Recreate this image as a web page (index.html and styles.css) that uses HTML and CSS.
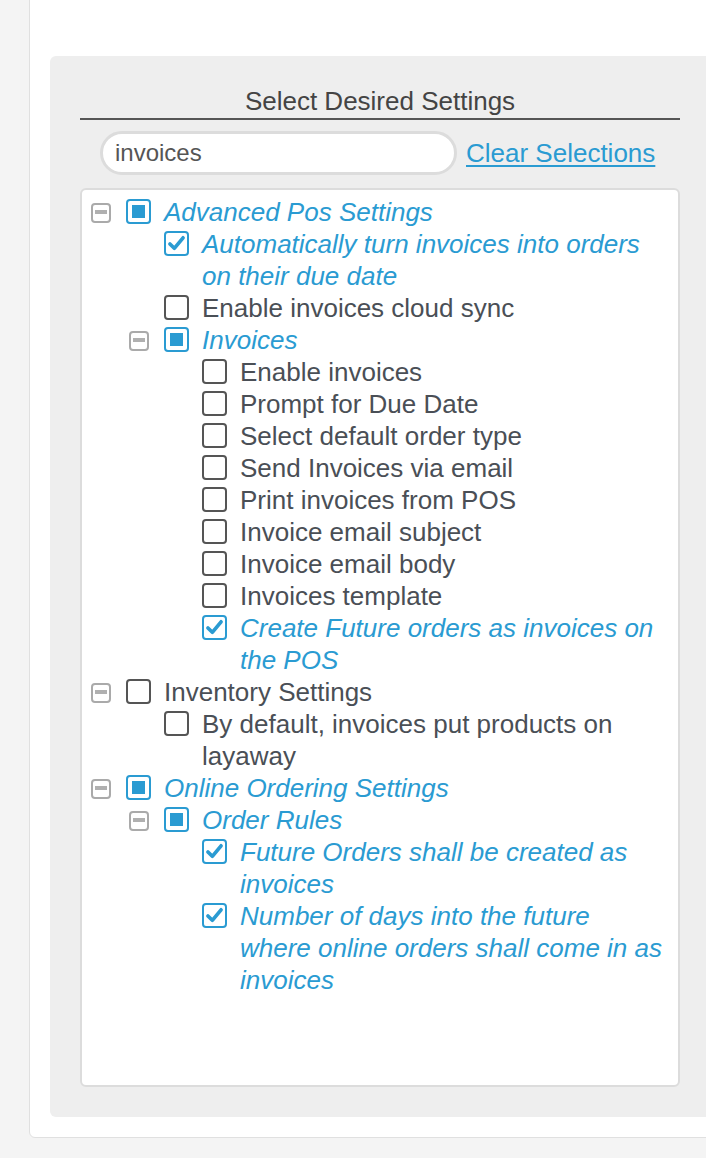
FILE: index.html
```html
<!DOCTYPE html>
<html>
<head>
<meta charset="utf-8">
<link rel="stylesheet" href="styles.css">
</head>
<body>
<div class="card">
  <div class="panel">
    <div class="inner">
      <h2 class="title">Select Desired Settings</h2>
      <div class="search-row">
        <div class="search"><span>invoices</span></div>
        <a class="clear" href="#">Clear Selections</a>
      </div>
      <div class="tree">
        <div class="row l0"><span class="tog"></span><span class="cb ind"></span><span class="lbl sel">Advanced Pos Settings</span></div>
        <div class="row l1"><span class="slot"></span><span class="cb chk"><svg viewBox="0 0 24 24"><path d="M4.5 12.5l5 5L19.5 5.5"/></svg></span><span class="lbl sel">Automatically turn invoices into orders on their due date</span></div>
        <div class="row l1"><span class="slot"></span><span class="cb"></span><span class="lbl">Enable invoices cloud sync</span></div>
        <div class="row l1"><span class="tog"></span><span class="cb ind"></span><span class="lbl sel">Invoices</span></div>
        <div class="row l2"><span class="slot"></span><span class="cb"></span><span class="lbl">Enable invoices</span></div>
        <div class="row l2"><span class="slot"></span><span class="cb"></span><span class="lbl">Prompt for Due Date</span></div>
        <div class="row l2"><span class="slot"></span><span class="cb"></span><span class="lbl">Select default order type</span></div>
        <div class="row l2"><span class="slot"></span><span class="cb"></span><span class="lbl">Send Invoices via email</span></div>
        <div class="row l2"><span class="slot"></span><span class="cb"></span><span class="lbl">Print invoices from POS</span></div>
        <div class="row l2"><span class="slot"></span><span class="cb"></span><span class="lbl">Invoice email subject</span></div>
        <div class="row l2"><span class="slot"></span><span class="cb"></span><span class="lbl">Invoice email body</span></div>
        <div class="row l2"><span class="slot"></span><span class="cb"></span><span class="lbl">Invoices template</span></div>
        <div class="row l2"><span class="slot"></span><span class="cb chk"><svg viewBox="0 0 24 24"><path d="M4.5 12.5l5 5L19.5 5.5"/></svg></span><span class="lbl sel">Create Future orders as invoices on the POS</span></div>
        <div class="row l0"><span class="tog"></span><span class="cb"></span><span class="lbl">Inventory Settings</span></div>
        <div class="row l1"><span class="slot"></span><span class="cb"></span><span class="lbl">By default, invoices put products on layaway</span></div>
        <div class="row l0"><span class="tog"></span><span class="cb ind"></span><span class="lbl sel">Online Ordering Settings</span></div>
        <div class="row l1"><span class="tog"></span><span class="cb ind"></span><span class="lbl sel">Order Rules</span></div>
        <div class="row l2"><span class="slot"></span><span class="cb chk"><svg viewBox="0 0 24 24"><path d="M4.5 12.5l5 5L19.5 5.5"/></svg></span><span class="lbl sel">Future Orders shall be created as invoices</span></div>
        <div class="row l2"><span class="slot"></span><span class="cb chk"><svg viewBox="0 0 24 24"><path d="M4.5 12.5l5 5L19.5 5.5"/></svg></span><span class="lbl sel">Number of days into the future where online orders shall come in as invoices</span></div>
      </div>
    </div>
  </div>
</div>
</body>
</html>
```
FILE: styles.css
```css
html, body {
  margin: 0;
  padding: 0;
}
body {
  background: #f4f4f4;
  overflow: hidden;
  height: 1158px;
  font-family: "Liberation Sans", Arial, sans-serif;
}
.card {
  margin: -10px 0 0 29px;
  width: 800px;
  background: #fff;
  border: 1px solid #e0e0e0;
  border-radius: 6px;
  padding: 65px 0 20px 20px;
}
.panel {
  background: #eeeeee;
  border-radius: 6px;
  padding: 30px 0 30px 30px;
}
.inner {
  width: 600px;
}
.title {
  margin: 0;
  font-weight: normal;
  font-size: 26px;
  line-height: 30px;
  color: #444;
  text-align: center;
  border-bottom: 2px solid #555;
  padding-bottom: 2px;
}
.search-row {
  display: flex;
  align-items: center;
  margin-top: 11px;
  padding-left: 20px;
}
.search {
  box-sizing: border-box;
  width: 357px;
  height: 44px;
  border: 3px solid #dcdcdc;
  border-radius: 22px;
  background: #fff;
  display: flex;
  align-items: center;
  padding-left: 12px;
  font-size: 24px;
  color: #555;
}
.clear {
  margin-left: 9px;
  font-size: 26px;
  color: #2a9bd2;
  text-decoration: underline;
  text-underline-offset: 3px;
}
.tree {
  box-sizing: border-box;
  margin-top: 13px;
  height: 899px;
  background: #fff;
  border: 2px solid #dcdcdc;
  border-radius: 6px;
  padding: 6px 14px 0 8px;
}
.row {
  display: flex;
  align-items: flex-start;
  font-size: 26px;
  line-height: 32px;
  color: #4a4f56;
}
.row.l1 { padding-left: 38px; }
.row.l2 { padding-left: 76px; }
.tog, .slot {
  flex: none;
  width: 36px;
  height: 32px;
  position: relative;
}
.tog::before {
  content: "";
  position: absolute;
  left: 1px;
  top: 7px;
  width: 16px;
  height: 16px;
  border: 2px solid #aaa;
  border-radius: 4px;
  box-sizing: content-box;
}
.tog::after {
  content: "";
  position: absolute;
  left: 5px;
  top: 14px;
  width: 12px;
  height: 4px;
  background: #b0b0b0;
}
.cb {
  flex: none;
  box-sizing: border-box;
  width: 25px;
  height: 25px;
  margin-top: 3px;
  margin-right: 13px;
  border: 2px solid #555;
  border-radius: 4px;
  display: flex;
  align-items: center;
  justify-content: center;
}
.cb.ind, .cb.chk {
  border-color: #2a9bd2;
}
.cb.ind::before {
  content: "";
  width: 13px;
  height: 13px;
  background: #2a9bd2;
}
.cb svg {
  width: 21px;
  height: 21px;
}
.cb svg path {
  fill: none;
  stroke: #2a9bd2;
  stroke-width: 4.2;
  stroke-linecap: round;
  stroke-linejoin: round;
}
.lbl {
  flex: 1;
}
.lbl.sel {
  color: #2a9bd2;
  font-style: italic;
}
```
